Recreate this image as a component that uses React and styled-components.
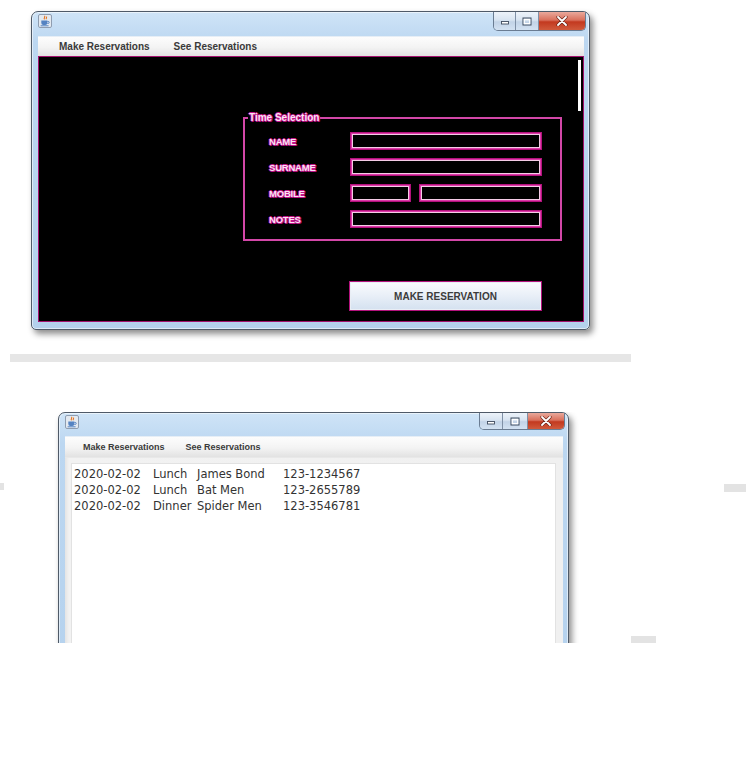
import React from "react";
import styled, { createGlobalStyle } from "styled-components";

const reservations = [
  { date: "2020-02-02", meal: "Lunch", name: "James Bond", phone: "123-1234567" },
  { date: "2020-02-02", meal: "Lunch", name: "Bat Men", phone: "123-2655789" },
  { date: "2020-02-02", meal: "Dinner", name: "Spider Men", phone: "123-3546781" },
];

const GlobalStyle = createGlobalStyle`
  body {
    margin: 0;
    background: #fff;
    font-family: "Liberation Sans", Arial, sans-serif;
  }
`;

const Page = styled.div`
  width: 746px;
  height: 760px;
  overflow: hidden;
`;

const TopArea = styled.div`
  padding: 11px 0 0 31px;
`;

const Frame = styled.div`
  width: ${(p) => p.$w}px;
  height: ${(p) => (p.$h ? `${p.$h}px` : "auto")};
  box-sizing: border-box;
  border: 1px solid #4f5a68;
  border-radius: 7px 7px 5px 5px;
  background: linear-gradient(to bottom, #cfe4f7 0px, #bcd7f1 30px, #b4d1ed 100%);
  padding: 0 5px 7px 6px;
  box-shadow: 3px 4px 6px rgba(0, 0, 0, 0.45), inset 0 0 0 1px rgba(255, 255, 255, 0.55);
  flex-shrink: 0;
`;

const TitleBar = styled.div`
  height: ${(p) => p.$h}px;
  display: flex;
  justify-content: space-between;
  align-items: flex-start;
`;

const IconSlot = styled.div`
  margin-top: 2px;
  display: flex;
`;

const Controls = styled.div`
  display: flex;
  height: ${(p) => p.$h}px;
  margin-right: -2px;
  border: 1px solid #6a7c92;
  border-top: none;
  border-radius: 0 0 5px 5px;
  overflow: hidden;
`;

const ControlButton = styled.div`
  width: ${(p) => p.$w}px;
  display: flex;
  align-items: center;
  justify-content: center;
  border-left: ${(p) => (p.$first ? "none" : "1px solid #7f90a6")};
  background: ${(p) =>
    p.$close
      ? "linear-gradient(to bottom, #e9a99c 0%, #d9705c 45%, #c3391f 55%, #d05a3c 100%)"
      : "linear-gradient(to bottom, #edf3fa 0%, #d8e4f1 45%, #c2d3e7 55%, #d3e2f2 100%)"};
`;

const MenuBar = styled.div`
  height: ${(p) => p.$h}px;
  display: flex;
  align-items: center;
  gap: ${(p) => (p.$small ? 21 : 24)}px;
  padding-left: ${(p) => (p.$small ? 18 : 21)}px;
  background: linear-gradient(to bottom, #fdfdfd 0%, #f3f3f3 55%, #e2e2e2 100%);
  border-top: 1px solid #e6eef6;
`;

const MenuItem = styled.span`
  font-size: ${(p) => (p.$small ? 9 : 10)}px;
  font-weight: bold;
  color: #3a3a3a;
`;

const DarkPanel = styled.div`
  height: 266px;
  box-sizing: border-box;
  background: #000;
  border: 1px solid #a3126e;
  display: flex;
  flex-direction: column;
  align-items: flex-start;
`;

const ScrollMark = styled.div`
  align-self: flex-end;
  width: 3px;
  height: 51px;
  margin: 3px 2px 0 0;
  background: #fff;
`;

const GroupBox = styled.fieldset`
  margin: 1px 0 0 204px;
  padding: 0;
  width: 319px;
  box-sizing: border-box;
  border: 2px solid #d347a8;
  min-width: 0;
`;

const GroupTitle = styled.legend`
  margin-left: 3px;
  padding: 0 1px;
  font-size: 10px;
  font-weight: bold;
  color: #fbe3f4;
  text-shadow: 1px 0 #c0148a, -1px 0 #c0148a, 0 1px #c0148a, 0 -1px #c0148a, 1px 1px #9c0f6e;
`;

const FormGrid = styled.div`
  display: grid;
  grid-template-columns: 81px 192px;
  grid-auto-rows: 18px;
  row-gap: 8px;
  padding: 9px 0 11px 24px;
`;

const Label = styled.span`
  align-self: center;
  font-size: 9.5px;
  font-weight: bold;
  letter-spacing: -0.2px;
  color: #fbe3f4;
  text-shadow: 1px 0 #c0148a, -1px 0 #c0148a, 0 1px #c0148a, 0 -1px #c0148a, 1px 1px #9c0f6e;
`;

const FieldRow = styled.div`
  display: flex;
  gap: 8px;
`;

const Field = styled.div`
  width: ${(p) => (p.$w ? `${p.$w}px` : "100%")};
  height: 18px;
  box-sizing: border-box;
  background: #000;
  border: 1px solid #b3127c;
  box-shadow: inset 0 0 0 1px #dc3aa8, inset 0 0 0 2px #f4cbe6;
`;

const ReserveButton = styled.div`
  margin: 40px 0 0 310px;
  width: 193px;
  height: 30px;
  box-sizing: border-box;
  border: 1px solid #b3127c;
  box-shadow: inset 0 0 0 1px #e9eef5;
  background: linear-gradient(to bottom, #fbfcfe 0%, #eaf0f8 45%, #d4e1f0 100%);
  display: flex;
  align-items: center;
  justify-content: center;
  font-size: 10px;
  font-weight: bold;
  color: #3c3c3c;
`;

const Divider = styled.div`
  margin: 24px 0 0 10px;
  width: 621px;
  height: 8px;
  background: #e6e6e6;
`;

const BottomRow = styled.div`
  margin-top: 50px;
  height: 231px;
  display: flex;
  align-items: flex-start;
  overflow: hidden;
`;

const Stub = styled.div`
  width: ${(p) => p.$w}px;
  height: ${(p) => p.$h}px;
  background: #e3e3e3;
  flex-shrink: 0;
`;

const LeftStub = styled(Stub)`
  margin: 71px 54px 0 0;
`;

const RightColumn = styled.div`
  margin-left: 62px;
  width: 115px;
  height: 100%;
  display: flex;
  flex-direction: column;
`;

const RightStub = styled(Stub)`
  align-self: flex-end;
  margin-top: 72px;
`;

const BottomStub = styled(Stub)`
  margin-top: auto;
`;

const LightPanel = styled.div`
  height: 260px;
  background: linear-gradient(to right, #e4e4e4, #f2f2f2 4px, #f0f0f0);
  padding: 5px 7px 0 6px;
  border-top: 1px solid #e8e8e8;
`;

const ListArea = styled.div`
  height: 100%;
  background: #fff;
  border: 1px solid #e2e2e2;
  padding: 2px 0 0 2px;
`;

const ListRow = styled.div`
  display: grid;
  grid-template-columns: 79px 44px 86px auto;
  height: 16px;
  align-items: center;
  font-family: "DejaVu Sans", Verdana, sans-serif;
  font-size: 11.5px;
  color: #333;
  white-space: pre;
`;

const JavaIcon = () => (
  <svg width="14" height="14" viewBox="0 0 14 14">
    <rect x="0.5" y="0.5" width="13" height="13" rx="1.5" fill="#e3e9f0" stroke="#8f9db0" />
    <path d="M6.5 1.8c1.2 1.4-1.2 2 0 3.6M8.4 2.6c.8 1-.8 1.4 0 2.6" stroke="#e8731c" strokeWidth="1.1" fill="none" />
    <path d="M3.3 6.6h6v2.4a2 2 0 0 1-2 2h-2a2 2 0 0 1-2-2z" fill="#5583c2" />
    <path d="M9.3 7.4h.9a1 1 0 0 1 0 2h-.9" stroke="#5583c2" fill="none" />
    <path d="M2.6 11.8h8" stroke="#5583c2" />
  </svg>
);

const MinGlyph = () => (
  <svg width="10" height="8" viewBox="0 0 10 8">
    <rect x="1.5" y="4.5" width="7" height="2.5" fill="#fff" stroke="#3f4c5e" strokeWidth="0.9" />
  </svg>
);

const MaxGlyph = () => (
  <svg width="10" height="9" viewBox="0 0 10 9">
    <rect x="1" y="1" width="8" height="7" fill="none" stroke="#3f4c5e" strokeWidth="1" />
    <rect x="2.3" y="2.6" width="5.4" height="4" fill="none" stroke="#fff" strokeWidth="1.2" />
  </svg>
);

const CloseGlyph = () => (
  <svg width="12" height="10" viewBox="0 0 12 10">
    <path d="M2 1l8 8M10 1l-8 8" stroke="#6b2418" strokeWidth="3.2" strokeLinecap="round" />
    <path d="M2 1l8 8M10 1l-8 8" stroke="#fff" strokeWidth="1.8" strokeLinecap="round" />
  </svg>
);

const Window = ({ width, height, title, controls, menuHeight, small, children }) => (
  <Frame $w={width} $h={height}>
    <TitleBar $h={title}>
      <IconSlot>
        <JavaIcon />
      </IconSlot>
      <Controls $h={controls.h}>
        <ControlButton $w={controls.min} $first>
          <MinGlyph />
        </ControlButton>
        <ControlButton $w={controls.max}>
          <MaxGlyph />
        </ControlButton>
        <ControlButton $w={controls.close} $close>
          <CloseGlyph />
        </ControlButton>
      </Controls>
    </TitleBar>
    <MenuBar $h={menuHeight} $small={small}>
      <MenuItem $small={small}>Make Reservations</MenuItem>
      <MenuItem $small={small}>See Reservations</MenuItem>
    </MenuBar>
    {children}
  </Frame>
);

const App = () => {
  return (
    <Page>
      <GlobalStyle />
      <TopArea>
        <Window
          width={559}
          title={24}
          menuHeight={19}
          controls={{ h: 18, min: 21, max: 22, close: 46 }}
        >
          <DarkPanel>
            <ScrollMark />
            <GroupBox>
              <GroupTitle>Time Selection</GroupTitle>
              <FormGrid>
                <Label>NAME</Label>
                <Field />
                <Label>SURNAME</Label>
                <Field />
                <Label>MOBILE</Label>
                <FieldRow>
                  <Field $w={61} />
                  <Field $w={123} />
                </FieldRow>
                <Label>NOTES</Label>
                <Field />
              </FormGrid>
            </GroupBox>
            <ReserveButton>MAKE RESERVATION</ReserveButton>
          </DarkPanel>
        </Window>
      </TopArea>
      <Divider />
      <BottomRow>
        <LeftStub $w={4} $h={7} />
        <Window
          width={511}
          height={320}
          title={23}
          menuHeight={20}
          small
          controls={{ h: 16, min: 22, max: 24, close: 36 }}
        >
          <LightPanel>
            <ListArea>
              {reservations.map((r, i) => (
                <ListRow key={i}>
                  <span>{r.date}</span>
                  <span>{r.meal}</span>
                  <span>{r.name}</span>
                  <span>{r.phone}</span>
                </ListRow>
              ))}
            </ListArea>
          </LightPanel>
        </Window>
        <RightColumn>
          <RightStub $w={22} $h={8} />
          <BottomStub $w={25} $h={7} />
        </RightColumn>
      </BottomRow>
    </Page>
  );
};

export default App;
